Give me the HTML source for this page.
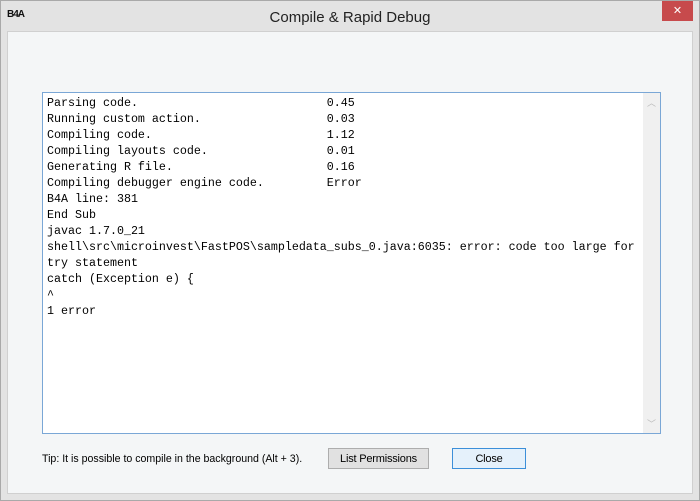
<!DOCTYPE html>
<html><head><style>
body{margin:0;width:700px;height:501px;overflow:hidden;background:#e3e3e3;font-family:"Liberation Sans",sans-serif;position:relative}
.win{position:absolute;left:0;top:0;width:698px;height:499px;border:1px solid #a9a9a9;background:#e3e3e3}
.title{position:absolute;left:0;top:9px;width:700px;text-align:center;font-size:15px;color:#222}
.logo{position:absolute;left:7px;top:9px;font-size:10px;font-weight:bold;letter-spacing:-1px;color:#111}
.x{position:absolute;left:662px;top:1px;width:31px;height:20px;background:#c74a4c;color:#fff;text-align:center;font-size:11px;line-height:20px}
.client{position:absolute;left:7px;top:31px;width:684px;height:461px;background:#f4f6f7;border:1px solid #d0d0d0}
.box{position:absolute;left:42px;top:92px;width:617px;height:340px;background:#fff;border:1px solid #7aa7d6}
.sb{position:absolute;right:0;top:0;width:17px;height:340px;background:#f0f0f0}
.sb span{position:absolute;left:4px;font-size:9px;color:#bbb}
pre{position:absolute;left:4px;top:2px;margin:0;font-family:"Liberation Mono",monospace;font-size:11.67px;line-height:16px;color:#000}
.tip{position:absolute;left:42px;top:453px;font-size:10.6px;color:#000}
.btn{position:absolute;top:448px;height:21px;background:#e1e1e1;border:1px solid #adadad;font-size:11px;text-align:center;line-height:20px;box-sizing:border-box;letter-spacing:-0.2px}
</style></head><body>
<div class="win"></div>
<div class="logo">B4A</div>
<div class="title">Compile &amp; Rapid Debug</div>
<div class="x">✕</div>
<div class="client"></div>
<div class="box"><pre>Parsing code.                           0.45
Running custom action.                  0.03
Compiling code.                         1.12
Compiling layouts code.                 0.01
Generating R file.                      0.16
Compiling debugger engine code.         Error
B4A line: 381
End Sub
javac 1.7.0_21
shell\src\microinvest\FastPOS\sampledata_subs_0.java:6035: error: code too large for
try statement
catch (Exception e) {
^
1 error</pre><div class="sb"><span style="top:3px">︿</span><span style="bottom:3px">﹀</span></div></div>
<div class="tip">Tip: It is possible to compile in the background (Alt + 3).</div>
<div class="btn" style="left:328px;width:101px">List Permissions</div>
<div class="btn" style="left:452px;width:74px;border-color:#3c8fd9;background:#e5f1fb">Close</div>
</body></html>
